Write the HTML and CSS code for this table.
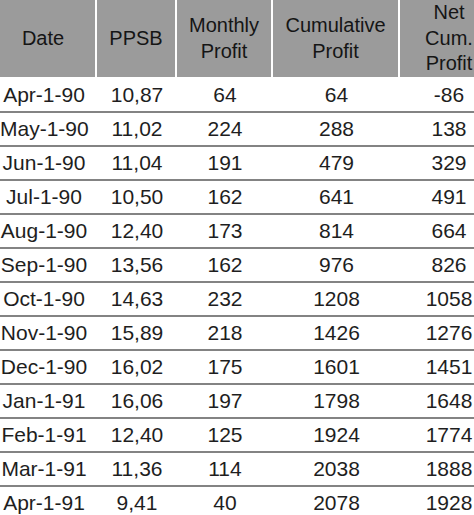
FILE: index.html
```html
<!DOCTYPE html>
<html>
<head>
<meta charset="utf-8">
<link rel="stylesheet" href="styles.css">
</head>
<body>
<table class="profit-table">
  <colgroup>
    <col class="c-date"><col class="c-ppsb"><col class="c-month"><col class="c-cum"><col class="c-net">
  </colgroup>
  <thead>
    <tr>
      <th class="first">Date</th>
      <th>PPSB</th>
      <th>Monthly<br>Profit</th>
      <th>Cumulative<br>Profit</th>
      <th class="last">Net<br>Cum.<br>Profit</th>
    </tr>
  </thead>
  <tbody>
    <tr><td>Apr-1-90</td><td>10,87</td><td>64</td><td>64</td><td>-86</td></tr>
    <tr><td>May-1-90</td><td>11,02</td><td>224</td><td>288</td><td>138</td></tr>
    <tr><td>Jun-1-90</td><td>11,04</td><td>191</td><td>479</td><td>329</td></tr>
    <tr><td>Jul-1-90</td><td>10,50</td><td>162</td><td>641</td><td>491</td></tr>
    <tr><td>Aug-1-90</td><td>12,40</td><td>173</td><td>814</td><td>664</td></tr>
    <tr><td>Sep-1-90</td><td>13,56</td><td>162</td><td>976</td><td>826</td></tr>
    <tr><td>Oct-1-90</td><td>14,63</td><td>232</td><td>1208</td><td>1058</td></tr>
    <tr><td>Nov-1-90</td><td>15,89</td><td>218</td><td>1426</td><td>1276</td></tr>
    <tr><td>Dec-1-90</td><td>16,02</td><td>175</td><td>1601</td><td>1451</td></tr>
    <tr><td>Jan-1-91</td><td>16,06</td><td>197</td><td>1798</td><td>1648</td></tr>
    <tr><td>Feb-1-91</td><td>12,40</td><td>125</td><td>1924</td><td>1774</td></tr>
    <tr><td>Mar-1-91</td><td>11,36</td><td>114</td><td>2038</td><td>1888</td></tr>
    <tr><td>Apr-1-91</td><td>9,41</td><td>40</td><td>2078</td><td>1928</td></tr>
  </tbody>
</table>
</body>
</html>
```
FILE: styles.css
```css
html, body {
  margin: 0;
  padding: 0;
  background: #ffffff;
  overflow: hidden;
}
body {
  width: 474px;
  height: 515px;
}
.profit-table {
  border-collapse: separate;
  border-spacing: 0;
  table-layout: fixed;
  width: 474px;
  font-family: "Liberation Sans", Arial, sans-serif;
  color: #1e1e1e;
}
.c-date { width: 97px; }
.c-ppsb { width: 80px; }
.c-month { width: 96px; }
.c-cum { width: 127px; }
.c-net { width: 74px; }

.profit-table th {
  background: #9b9b9b;
  border-right: 2px solid #ffffff;
  border-bottom: 2px solid #ffffff;
  height: 77px;
  padding: 0;
  font-weight: normal;
  font-size: 20px;
  line-height: 25.5px;
  color: #151515;
  text-align: center;
  vertical-align: middle;
  white-space: nowrap;
}
.profit-table th.last {
  border-right: none;
}
.profit-table td {
  height: 32px;
  padding: 0;
  border-bottom: 2px solid #838383;
  font-size: 21px;
  line-height: 32px;
  text-align: center;
  vertical-align: middle;
  white-space: nowrap;
}
.profit-table th:first-child,
.profit-table td:first-child {
  padding-right: 9px;
}
.profit-table th:last-child,
.profit-table td:last-child {
  padding-left: 24px;
}
```
